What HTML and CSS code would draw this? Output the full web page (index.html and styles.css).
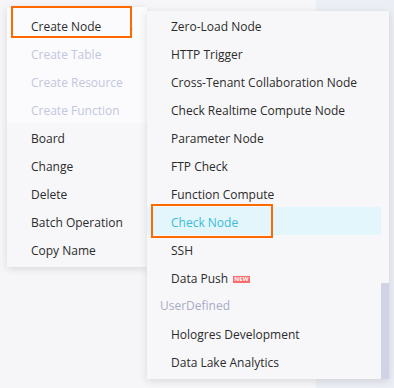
FILE: index.html
```html
<!DOCTYPE html>
<html>

<head>
    <meta charset="UTF-8">
    <link rel="stylesheet" href="styles.css">
</head>

<body>
    <div class="stage">
        <ul class="menu menu-main">
            <li class="item top marked">Create Node<span class="arrow">›</span></li>
            <li class="item top disabled">Create Table</li>
            <li class="item top disabled">Create Resource</li>
            <li class="item top disabled">Create Function</li>
            <li class="item">Board</li>
            <li class="item">Change</li>
            <li class="item">Delete</li>
            <li class="item">Batch Operation</li>
            <li class="item">Copy Name</li>
        </ul>

        <div class="menu menu-sub">
            <ul class="sub-list">
                <li class="item">Zero-Load Node</li>
                <li class="item">HTTP Trigger</li>
                <li class="item">Cross-Tenant Collaboration Node</li>
                <li class="item">Check Realtime Compute Node</li>
                <li class="item">Parameter Node</li>
                <li class="item">FTP Check</li>
                <li class="item">Function Compute</li>
                <li class="item active marked">Check Node</li>
                <li class="item">SSH</li>
                <li class="item">Data Push <span class="badge-new">NEW</span></li>
                <li class="group-title">UserDefined</li>
                <li class="item">Hologres Development</li>
                <li class="item">Data Lake Analytics</li>
            </ul>
            <div class="scroll-track">
                <div class="scroll-thumb"></div>
            </div>
        </div>
    </div>
</body>
</html>
```

FILE: styles.css
```css
:root {
    --text: #2b2b2b;
    --muted: #c3c6df;
    --group: #a9abc6;
    --menu-bg: #f7f7f9;
    --mark: #ff6a00;
}

body {
    margin: 0;
    font-family: 'Open Sans', 'Noto Sans', sans-serif;
    font-size: 12px;
    color: var(--text);
    background: linear-gradient(90deg, #f6f6f8 0, #f6f6f8 316px, #eceef5 316px);
    width: 394px;
    height: 388px;
    overflow: hidden;
}

.stage {
    display: flex;
    align-items: flex-start;
    padding-left: 7px;
}

ul {
    list-style: none;
    margin: 0;
    padding: 0;
}

.menu {
    background: var(--menu-bg);
    box-shadow: 0 2px 8px rgba(0, 0, 0, 0.12);
}

.menu-main {
    width: 140px;
    margin-top: 7px;
    padding: 4px 0;
    position: relative;
    z-index: 1;
}

.item {
    height: 28px;
    line-height: 32px;
    padding-left: 24px;
    white-space: nowrap;
    position: relative;
}

.menu-main .item.top {
    background: #fbfbfd;
}

.menu-main .item:first-child {
    margin-top: -4px;
    padding-top: 4px;
}

.item.disabled {
    color: var(--muted);
}

.arrow {
    position: absolute;
    right: 14px;
    top: 5px;
    color: #b8bac8;
    font-size: 11px;
}

/* orange annotation boxes */
.marked::after {
    content: "";
    position: absolute;
    border: 2px solid var(--mark);
}

.menu-main .marked::after {
    left: 4px;
    top: -1px;
    width: 117px;
    height: 28px;
}

.menu-sub .marked::after {
    left: 4px;
    top: -3px;
    width: 118px;
    height: 30px;
}

.menu-sub {
    width: 242px;
    margin-top: 11px;
    display: flex;
    position: relative;
    z-index: 2;
}

.sub-list {
    flex: 1;
    padding-bottom: 4px;
}

.item.active {
    background: #e2f6fb;
    color: #3bbcd9;
}

.group-title {
    height: 28px;
    line-height: 30px;
    padding-left: 13px;
    color: var(--group);
}

.badge-new {
    display: inline-block;
    vertical-align: 2px;
    margin-left: 2px;
    background: #ff6b6b;
    color: #fff;
    font-size: 6px;
    font-weight: 700;
    line-height: 7px;
    padding: 0 1px;
    letter-spacing: 0.2px;
}

.scroll-track {
    width: 8px;
    align-self: stretch;
    display: flex;
    flex-direction: column;
    justify-content: flex-end;
}

.scroll-thumb {
    height: 96px;
    background: #d0d3e6;
}
```
